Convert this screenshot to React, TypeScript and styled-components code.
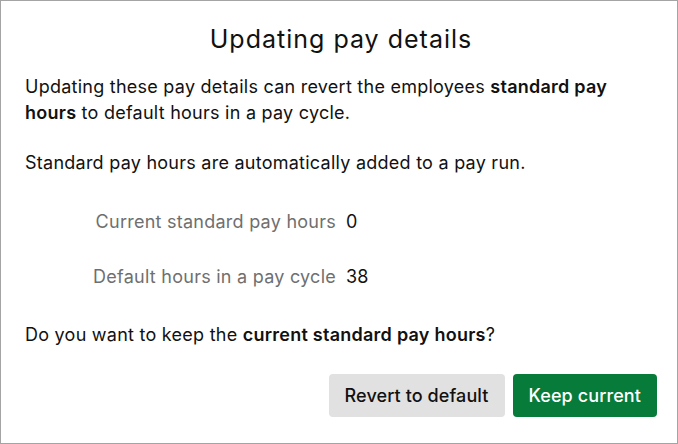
import styled, { createGlobalStyle } from 'styled-components';

const GlobalStyle = createGlobalStyle`
  html, body {
    margin: 0;
    padding: 0;
    background: #ffffff;
  }
  * {
    box-sizing: border-box;
  }
`;

const details = [
  { label: 'Current standard pay hours', value: '0' },
  { label: 'Default hours in a pay cycle', value: '38' },
];

const App = () => {
  return (
    <>
      <GlobalStyle />
      <Dialog>
        <Title>Updating pay details</Title>
        <Text>
          Updating these pay details can revert the employees <b>standard pay hours</b> to
          default hours in a pay cycle.
        </Text>
        <Text>Standard pay hours are automatically added to a pay run.</Text>
        <DetailGrid>
          {details.map((d) => (
            <DetailRow key={d.label}>
              <Label>{d.label}</Label>
              <Value>{d.value}</Value>
            </DetailRow>
          ))}
        </DetailGrid>
        <Text>
          Do you want to keep the <b>current standard pay hours</b>?
        </Text>
        <Actions>
          <Button>Revert to default</Button>
          <Button $primary>Keep current</Button>
        </Actions>
      </Dialog>
    </>
  );
};

const Dialog = styled.div`
  width: 100vw;
  height: 100vh;
  border: 1px solid #a4a4a4;
  padding: 22px 20px 0 24px;
  display: flex;
  flex-direction: column;
  font-family: Inter, 'Liberation Sans', sans-serif;
  letter-spacing: 0.25px;
  color: #111111;
`;

const Title = styled.h1`
  margin: 0 0 19px;
  font-size: 25px;
  font-weight: 400;
  line-height: 32px;
  letter-spacing: 1px;
  text-align: center;
  color: #111111;
`;

const Text = styled.p`
  margin: 0 0 24px;
  font-size: 18px;
  line-height: 26px;
  b {
    font-weight: 600;
  }
`;

const DetailGrid = styled.div`
  display: flex;
  flex-direction: column;
  gap: 29px;
  margin: 9px 0 32px;
`;

const DetailRow = styled.div`
  display: grid;
  grid-template-columns: 311px 1fr;
  column-gap: 10px;
  font-size: 18px;
  line-height: 26px;
`;

const Label = styled.span`
  text-align: right;
  color: #6f6f6f;
`;

const Value = styled.span`
  color: #111111;
`;

const Actions = styled.div`
  display: flex;
  justify-content: flex-end;
  gap: 8px;
  margin-top: 2px;
`;

const Button = styled.button<{ $primary?: boolean }>`
  height: 43px;
  padding: 0 16px;
  border: none;
  border-radius: 4px;
  font-family: Inter, 'Liberation Sans', sans-serif;
  font-size: 18px;
  font-weight: 500;
  letter-spacing: 0.1px;
  cursor: pointer;
  background-color: ${(p) => (p.$primary ? '#067b3a' : '#e1e1e1')};
  color: ${(p) => (p.$primary ? '#ffffff' : '#111111')};
`;

export default App;
